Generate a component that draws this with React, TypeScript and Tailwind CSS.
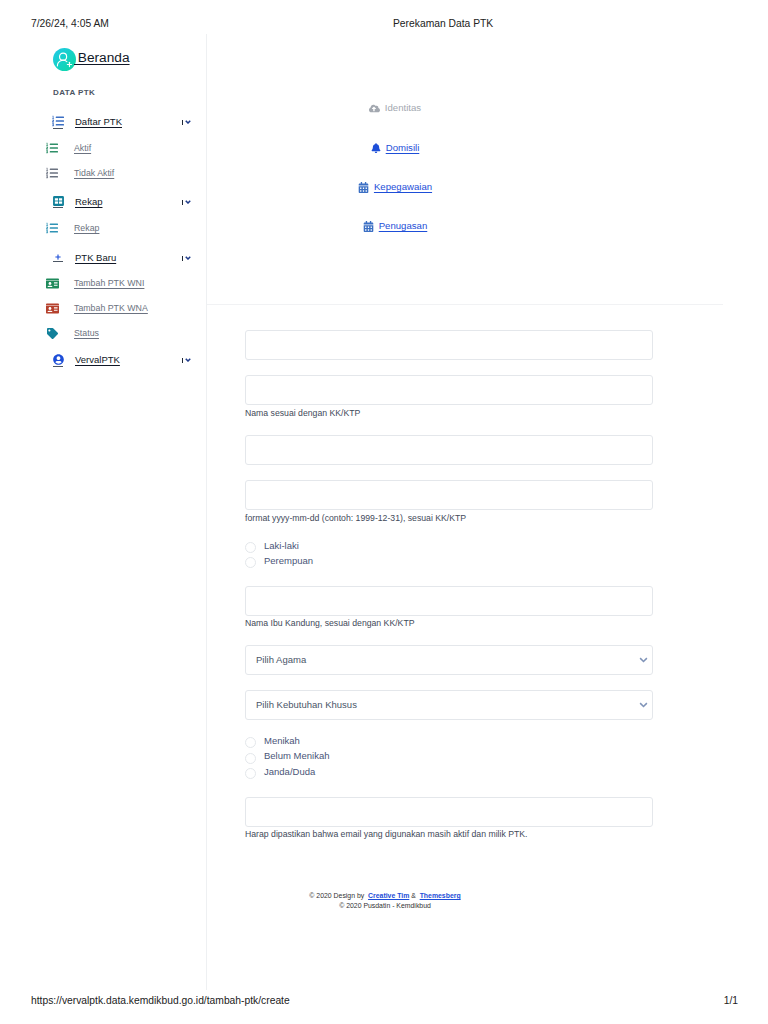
import React from "react";
import { FaBell, FaCalendarAlt, FaCloudUploadAlt, FaIdCard, FaListOl, FaPlus, FaTag, FaUserCircle } from "react-icons/fa";
import { UserRoundPlus } from "lucide-react";

const Chevron = ({ className, w = "2" }: { className: string; w?: string }) => (
  <svg viewBox="0 0 12 8" className={className} fill="none" stroke="currentColor" strokeWidth={w}>
    <path d="M1.5 1.5 6 6l4.5-4.5" />
  </svg>
);

const Caret = () => (
  <span className="ml-auto mr-[15px] flex items-center gap-[2px] text-[#1e3a8a]">
    <span className="h-[5px] w-px bg-[#1f2937]" />
    <Chevron className="h-[4px] w-[6px]" w="3" />
  </span>
);

const TableIcon = () => (
  <svg viewBox="0 0 12 11" className="h-[10px] w-[11px]">
    <rect width="12" height="11" rx="1.5" fill="#11809a" />
    <rect x="2" y="2.5" width="3.5" height="2.5" fill="#fff" />
    <rect x="6.5" y="2.5" width="3.5" height="2.5" fill="#fff" />
    <rect x="2" y="6" width="3.5" height="2.5" fill="#fff" />
    <rect x="6.5" y="6" width="3.5" height="2.5" fill="#fff" />
  </svg>
);

const Head = ({ icon, label, h }: { icon: React.ReactNode; label: string; h: string }) => (
  <div className={`flex items-center pl-[17px] ${h}`}>
    <span className="flex w-[22px] flex-col items-center">
      {icon}
      <span className="mt-[1px] h-px w-[10px] bg-[#4b5563]" />
    </span>
    <span className="ml-[6px] text-[9.5px] leading-none text-[#111827] underline underline-offset-2">{label}</span>
    <Caret />
  </div>
);

const Sub = ({ icon, label, h }: { icon: React.ReactNode; label: string; h: string }) => (
  <div className={`flex items-center pl-[16px] ${h}`}>
    <span className="flex w-[12px] flex-col items-center">{icon}</span>
    <span className="ml-[16px] text-[8.8px] leading-none text-[#6b7280] underline underline-offset-2">{label}</span>
  </div>
);

const Sidebar = () => (
  <aside className="flex w-[177px] shrink-0 flex-col border-r border-[#eef0f2]">
    <div className="mt-[14px] flex h-[23px] items-center pl-[23px]">
      <span className="flex h-[23px] w-[23px] items-center justify-center rounded-full bg-gradient-to-br from-[#22c8e8] to-[#10d9a0] text-white">
        <UserRoundPlus size={17} strokeWidth={1.6} />
      </span>
      <span className="mb-[3px] ml-[-2px] text-[13.7px] leading-none text-[#111827] underline underline-offset-2">&nbsp;Beranda</span>
    </div>
    <div className="mt-[12px] flex h-[20px] items-center pl-[23px] text-[8px] font-bold tracking-[0.4px] text-[#4b5563]">DATA PTK</div>
    <div className="mt-[9px]">
      <Head h="h-[20px]" label="Daftar PTK" icon={<FaListOl className="text-[12px] text-[#3b6fc4]" />} />
    </div>
    <div className="mt-[6px]">
      <Sub h="h-[20px]" label="Aktif" icon={<FaListOl className="text-[12px] text-[#2f8f68]" />} />
    </div>
    <div className="mt-[5px]">
      <Sub h="h-[20px]" label="Tidak Aktif" icon={<FaListOl className="text-[12px] text-[#6b7280]" />} />
    </div>
    <div className="mt-[9px]">
      <Head h="h-[20px]" label="Rekap" icon={<TableIcon />} />
    </div>
    <div className="mt-[6px]">
      <Sub h="h-[20px]" label="Rekap" icon={<FaListOl className="text-[12px] text-[#2f93b5]" />} />
    </div>
    <div className="mt-[10px]">
      <Head h="h-[20px]" label="PTK Baru" icon={<FaPlus className="text-[6px] text-[#1d4ed8]" />} />
    </div>
    <div className="mt-[5px]">
      <Sub h="h-[20px]" label="Tambah PTK WNI" icon={<FaIdCard className="text-[13px] text-[#1f8a5b]" />} />
    </div>
    <div className="mt-[5px]">
      <Sub h="h-[20px]" label="Tambah PTK WNA" icon={<FaIdCard className="text-[13px] text-[#b5402c]" />} />
    </div>
    <div className="mt-[5px]">
      <Sub h="h-[20px]" label="Status" icon={<FaTag className="text-[11px] text-[#11809a]" />} />
    </div>
    <div className="mt-[7px]">
      <Head h="h-[20px]" label="VervalPTK" icon={<FaUserCircle className="text-[11px] text-[#1d4ed8]" />} />
    </div>
  </aside>
);

const Field = ({ mt, hint, hintPos = "mt-[3px]" }: { mt: string; hint?: string; hintPos?: string }) => (
  <div className={mt}>
    <div className="h-[30px] w-[408px] rounded-[3px] border border-[#e4e7eb] bg-white" />
    {hint && <p className={`${hintPos} h-[10px] text-[8.7px] leading-[10px] text-[#3f4a5a]`}>{hint}</p>}
  </div>
);

const Radio = ({ label, h }: { label: string; h: string }) => (
  <div className={`flex items-center ${h}`}>
    <span className="mt-[2px] h-[11px] w-[11px] rounded-full border border-[#e4e7eb]" />
    <span className="mb-[2px] ml-[8px] text-[9.5px] leading-none text-[#4a5578]">{label}</span>
  </div>
);

const SelectBox = ({ mt, label }: { mt: string; label: string }) => (
  <div className={`${mt} flex h-[30px] w-[408px] items-center justify-between rounded-[3px] border border-[#e4e7eb] bg-white pl-[10px] pr-[4px]`}>
    <span className="text-[9.5px] text-[#4a5568]">{label}</span>
    <Chevron className="h-[6px] w-[9px] text-[#7f93b8]" />
  </div>
);

const Tab = ({ icon, label, mt, active = true }: { icon: React.ReactNode; label: string; mt: string; active?: boolean }) => (
  <div className={`${mt} flex h-[16px] items-center gap-[5px]`}>
    {icon}
    <span className={`text-[9.6px] leading-none ${active ? "text-[#1d4ed8] underline underline-offset-2" : "text-[#a3a8b0]"}`}>{label}</span>
  </div>
);

export default function App() {
  return (
    <div className="flex h-[1024px] w-[768px] flex-col bg-white text-[#111827] [font-family:'Liberation_Sans',Arial,sans-serif]">
      <header className="relative flex h-[34px] shrink-0 items-start pl-[31px] pt-[17px] text-[10.3px] leading-[13px] text-[#222]">
        <span>7/26/24, 4:05 AM</span>
        <span className="absolute left-[393px] top-[17px]">Perekaman Data PTK</span>
      </header>
      <div className="flex h-[956px] pl-[30px]">
        <Sidebar />
        <main className="w-[516px]">
          <nav className="flex h-[270px] w-[376px] flex-col items-center pt-[66px]">
            <Tab mt="mt-0" active={false} label="Identitas" icon={<FaCloudUploadAlt className="text-[11px] text-[#a3a8b0]" />} />
            <Tab mt="mt-[24px]" label="Domisili" icon={<FaBell className="text-[10px] text-[#1d4ed8]" />} />
            <Tab mt="mt-[23px]" label="Kepegawaian" icon={<FaCalendarAlt className="text-[11px] text-[#3b6fc4]" />} />
            <Tab mt="mt-[23px]" label="Penugasan" icon={<FaCalendarAlt className="text-[11px] text-[#3b6fc4]" />} />
          </nav>
          <div className="h-px w-full bg-[#f1f2f4]" />
          <form className="pl-[38px]">
            <Field mt="mt-[25px]" />
            <Field mt="mt-[15px]" hint="Nama sesuai dengan KK/KTP" />
            <Field mt="mt-[17px]" />
            <Field mt="mt-[15px]" hint="format yyyy-mm-dd (contoh: 1999-12-31), sesuai KK/KTP" />
            <div className="mt-[16px]">
              <Radio h="h-[15px]" label="Laki-laki" />
              <Radio h="h-[15px]" label="Perempuan" />
            </div>
            <Field mt="mt-[17px]" hint="Nama Ibu Kandung, sesuai dengan KK/KTP" hintPos="mt-[2px]" />
            <SelectBox mt="mt-[17px]" label="Pilih Agama" />
            <SelectBox mt="mt-[15px]" label="Pilih Kebutuhan Khusus" />
            <div className="mt-[14px]">
              <Radio h="h-[15px]" label="Menikah" />
              <Radio h="h-[16px]" label="Belum Menikah" />
              <Radio h="h-[15px]" label="Janda/Duda" />
            </div>
            <Field mt="mt-[17px]" hint="Harap dipastikan bahwa email yang digunakan masih aktif dan milik PTK." hintPos="mt-[2px]" />
          </form>
          <footer className="mt-[52px] w-[356px] text-center text-[6.9px] leading-[10px] text-[#333]">
            <p>
              © 2020 Design by &nbsp;<span className="font-bold text-[#1d4ed8] underline">Creative Tim</span> &amp; &nbsp;
              <span className="font-bold text-[#1d4ed8] underline">Themesberg</span>
            </p>
            <p>© 2020 Pusdatin - Kemdikbud</p>
          </footer>
        </main>
      </div>
      <div className="flex items-center justify-between pl-[31px] pr-[30px] pt-[4px] text-[10.3px] leading-[13px] text-[#222]">
        <span>https://vervalptk.data.kemdikbud.go.id/tambah-ptk/create</span>
        <span>1/1</span>
      </div>
    </div>
  );
}
